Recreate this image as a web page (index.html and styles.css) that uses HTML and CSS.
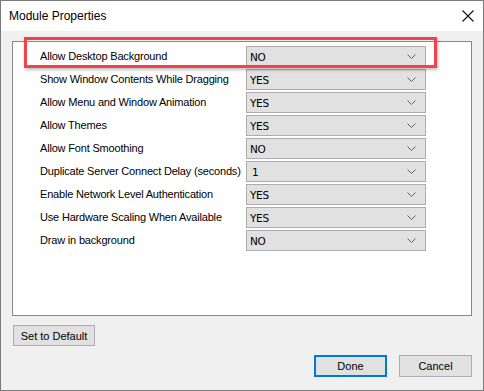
FILE: index.html
```html
<!DOCTYPE html>
<html>
<head>
<meta charset="utf-8">
<link rel="stylesheet" href="styles.css">
</head>
<body>
<div class="window">
  <div class="titlebar">
    <span class="title">Module Properties</span>
    <svg class="close" width="12" height="12" viewBox="0 0 12 12"><path d="M0.5 0.5L11.5 11.5M11.5 0.5L0.5 11.5" stroke="#111" stroke-width="1.1" fill="none"/></svg>
  </div>
  <div class="content">
    <div class="panel">
      <div class="highlight"></div>
      <div class="grid">
        <div class="label">Allow Desktop Background</div>
        <div class="combo"><span>NO</span><svg class="chev" width="9" height="5" viewBox="0 0 9 5"><path d="M0.5 0.5L4.5 4.5L8.5 0.5" stroke="#606060" fill="none"/></svg></div>
        <div class="label">Show Window Contents While Dragging</div>
        <div class="combo"><span>YES</span><svg class="chev" width="9" height="5" viewBox="0 0 9 5"><path d="M0.5 0.5L4.5 4.5L8.5 0.5" stroke="#606060" fill="none"/></svg></div>
        <div class="label">Allow Menu and Window Animation</div>
        <div class="combo"><span>YES</span><svg class="chev" width="9" height="5" viewBox="0 0 9 5"><path d="M0.5 0.5L4.5 4.5L8.5 0.5" stroke="#606060" fill="none"/></svg></div>
        <div class="label">Allow Themes</div>
        <div class="combo"><span>YES</span><svg class="chev" width="9" height="5" viewBox="0 0 9 5"><path d="M0.5 0.5L4.5 4.5L8.5 0.5" stroke="#606060" fill="none"/></svg></div>
        <div class="label">Allow Font Smoothing</div>
        <div class="combo"><span>NO</span><svg class="chev" width="9" height="5" viewBox="0 0 9 5"><path d="M0.5 0.5L4.5 4.5L8.5 0.5" stroke="#606060" fill="none"/></svg></div>
        <div class="label">Duplicate Server Connect Delay (seconds)</div>
        <div class="combo edit"><span>1</span><svg class="chev" width="9" height="5" viewBox="0 0 9 5"><path d="M0.5 0.5L4.5 4.5L8.5 0.5" stroke="#606060" fill="none"/></svg></div>
        <div class="label">Enable Network Level Authentication</div>
        <div class="combo"><span>YES</span><svg class="chev" width="9" height="5" viewBox="0 0 9 5"><path d="M0.5 0.5L4.5 4.5L8.5 0.5" stroke="#606060" fill="none"/></svg></div>
        <div class="label">Use Hardware Scaling When Available</div>
        <div class="combo"><span>YES</span><svg class="chev" width="9" height="5" viewBox="0 0 9 5"><path d="M0.5 0.5L4.5 4.5L8.5 0.5" stroke="#606060" fill="none"/></svg></div>
        <div class="label">Draw in background</div>
        <div class="combo"><span>NO</span><svg class="chev" width="9" height="5" viewBox="0 0 9 5"><path d="M0.5 0.5L4.5 4.5L8.5 0.5" stroke="#606060" fill="none"/></svg></div>
      </div>
    </div>
    <div class="default-row">
      <button class="btn default-btn">Set to Default</button>
    </div>
    <div class="actions">
      <button class="btn done">Done</button>
      <button class="btn cancel">Cancel</button>
    </div>
  </div>
</div>
</body>
</html>
```
FILE: styles.css
```css
html, body {
  margin: 0;
  padding: 0;
  background: #f0f0f0;
}
.window {
  width: 484px;
  height: 391px;
  box-sizing: border-box;
  border: 1px solid #7a7a7a;
  background: #f0f0f0;
  display: flex;
  flex-direction: column;
  font-family: "Liberation Sans", Arial, sans-serif;
  font-size: 11px;
  color: #000;
}
.titlebar {
  height: 30px;
  background: #fff;
  display: flex;
  align-items: center;
  justify-content: space-between;
  padding: 0 9px 0 8px;
  flex-shrink: 0;
}
.title {
  font-family: "Liberation Sans", Arial, sans-serif;
  font-size: 12px;
  color: #000;
  margin-top: -1px;
}
.content {
  flex: 1;
  display: flex;
  flex-direction: column;
  padding: 10px 11px 0 11px;
}
.panel {
  position: relative;
  height: 275px;
  box-sizing: border-box;
  border: 1px solid #828790;
  background: #fff;
  padding: 4px 0 0 27px;
}
.highlight {
  position: absolute;
  left: 11px;
  top: -5px;
  width: 413px;
  height: 31px;
  box-sizing: border-box;
  border: 3px solid #f4424a;
  box-shadow: 1px 2px 3px rgba(0,0,0,0.25);
  pointer-events: none;
}
.grid {
  display: grid;
  grid-template-columns: 206px 180px;
  grid-auto-rows: 21px;
  row-gap: 2px;
}
.label {
  display: flex;
  align-items: center;
  white-space: nowrap;
  color: #000;
  letter-spacing: -0.18px;
  padding-bottom: 2px;
}
.combo {
  box-sizing: border-box;
  border: 1px solid #adadad;
  background: #e1e1e1;
  display: flex;
  align-items: center;
  justify-content: space-between;
  padding: 0 9px 0 3px;
  font-family: "DejaVu Sans", sans-serif;
  font-size: 10.5px;
  letter-spacing: -0.3px;
  color: #000;
}
.combo.edit {
  padding-left: 5px;
}
.chev {
  display: block;
}
.default-row {
  padding-top: 9px;
  display: flex;
}
.btn {
  font-family: "Liberation Sans", Arial, sans-serif;
  font-size: 11px;
  color: #000;
  background: #e1e1e1;
  border: 1px solid #adadad;
  box-sizing: border-box;
  margin: 0;
  padding: 0;
  height: 21px;
}
.default-btn {
  margin-left: 1px;
  width: 82px;
}
.actions {
  display: flex;
  justify-content: flex-end;
  gap: 12px;
  padding-top: 9px;
}
.done {
  width: 73px;
  height: 22px;
  border: 2px solid #0078d7;
}
.cancel {
  width: 73px;
  height: 22px;
}
```
